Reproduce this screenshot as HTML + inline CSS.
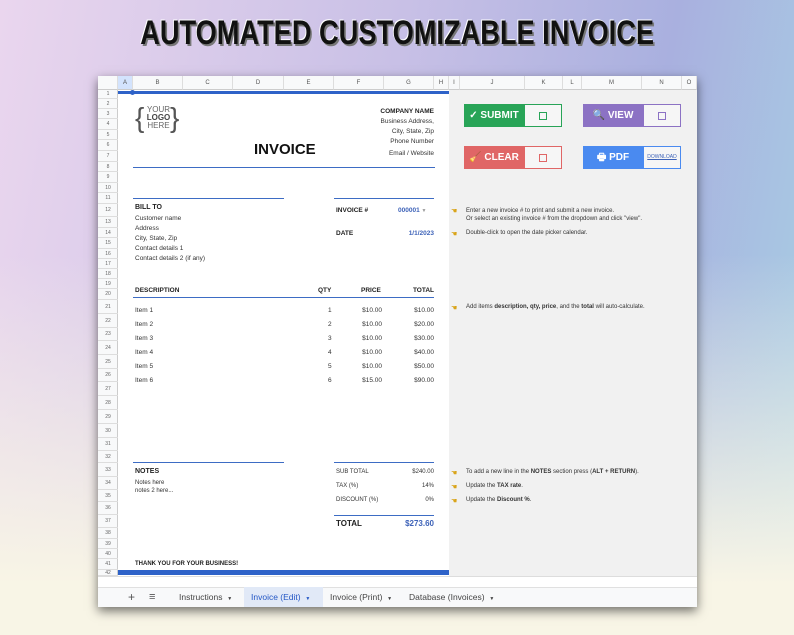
<!DOCTYPE html>
<html><head><meta charset="utf-8"><style>
*{margin:0;padding:0;box-sizing:border-box}
body{width:794px;height:635px;overflow:hidden;position:relative;font-family:"Liberation Sans",Arial,sans-serif;
background:linear-gradient(180deg,rgba(255,255,255,0) 40%,#f8f5e6 92%),linear-gradient(100deg,#ead6ee 0%,#c8c0e6 45%,#a9b0df 75%,#a8d0e4 100%);}
.a{position:absolute;white-space:nowrap}
.title{left:0;width:794px;top:14px;text-align:center;font-weight:bold;font-size:34px;color:#111;text-shadow:2px 2px 0 #777,-1px -1px 0 #fff;}
.title span{display:inline-block;transform:scaleX(.8)}
.win{left:98px;top:76px;width:599px;height:531px;background:#fff;box-shadow:0 4px 10px rgba(0,0,0,.55);overflow:hidden}
.ch{top:0;height:14px;border-right:1px solid #ddd;border-bottom:1px solid #ccc;background:#f8f9fa;font-size:6px;color:#555;text-align:center;line-height:14px}
.rn{left:0;width:20px;font-size:5px;color:#666;text-align:center;border-bottom:1px solid #ddd}
.t{font-size:6.5px;color:#333}
.b{font-weight:bold;color:#222}
.tip{font-size:6px;color:#333}
.hand{font-size:7px;color:#d9a41a}
.btn{height:23px;font-weight:bold;color:#fff;font-size:10px;line-height:23px}
.tab{top:511px;height:20px;line-height:20px;font-size:8.5px;color:#444}
</style></head><body>
<div class="a title"><span>AUTOMATED CUSTOMIZABLE INVOICE</span></div>
<div class="a win">
 <!-- gray right area -->
 <div class="a" style="left:351px;top:14px;width:248px;height:486px;background:#f1f1f1"></div>
 <div class="a" style="left:0;top:14px;width:20px;height:486px;background:#f8f9fa;border-right:1px solid #ccc"></div>
 <!-- column headers -->
 <div class="a ch" style="left:0;width:20px"></div>
 <div class="a ch" style="left:20px;width:15px;background:#d3e3fd">A</div>
 <div class="a ch" style="left:35px;width:50px">B</div>
 <div class="a ch" style="left:85px;width:50px">C</div>
 <div class="a ch" style="left:135px;width:51px">D</div>
 <div class="a ch" style="left:186px;width:50px">E</div>
 <div class="a ch" style="left:236px;width:50px">F</div>
 <div class="a ch" style="left:286px;width:50px">G</div>
 <div class="a ch" style="left:336px;width:15px">H</div>
 <div class="a ch" style="left:351px;width:11px">I</div>
 <div class="a ch" style="left:362px;width:65px">J</div>
 <div class="a ch" style="left:427px;width:38px">K</div>
 <div class="a ch" style="left:465px;width:19px">L</div>
 <div class="a ch" style="left:484px;width:60px">M</div>
 <div class="a ch" style="left:544px;width:40px">N</div>
 <div class="a ch" style="left:584px;width:15px">O</div>
 <!-- row numbers -->
 <div class="a rn" style="top:15px;height:8px">1</div>
 <div class="a rn" style="top:23px;height:10px;line-height:10px">2</div>
 <div class="a rn" style="top:33px;height:10px;line-height:10px">3</div>
 <div class="a rn" style="top:43px;height:11px;line-height:11px">4</div>
 <div class="a rn" style="top:54px;height:10px;line-height:10px">5</div>
 <div class="a rn" style="top:64px;height:11px;line-height:11px">6</div>
 <div class="a rn" style="top:75px;height:11px;line-height:11px">7</div>
 <div class="a rn" style="top:86px;height:10px;line-height:10px">8</div>
 <div class="a rn" style="top:96px;height:11px;line-height:11px">9</div>
 <div class="a rn" style="top:107px;height:10px;line-height:10px">10</div>
 <div class="a rn" style="top:117px;height:11px;line-height:11px">11</div>
 <div class="a rn" style="top:128px;height:13px;line-height:13px">12</div>
 <div class="a rn" style="top:141px;height:11px;line-height:11px">13</div>
 <div class="a rn" style="top:152px;height:10px;line-height:10px">14</div>
 <div class="a rn" style="top:162px;height:11px;line-height:11px">15</div>
 <div class="a rn" style="top:173px;height:10px;line-height:10px">16</div>
 <div class="a rn" style="top:183px;height:10px;line-height:10px">17</div>
 <div class="a rn" style="top:193px;height:10px;line-height:10px">18</div>
 <div class="a rn" style="top:203px;height:10px;line-height:10px">19</div>
 <div class="a rn" style="top:213px;height:11px;line-height:11px">20</div>
 <div class="a rn" style="top:224px;height:14px;line-height:14px">21</div>
 <div class="a rn" style="top:238px;height:14px;line-height:14px">22</div>
 <div class="a rn" style="top:252px;height:13px;line-height:13px">23</div>
 <div class="a rn" style="top:265px;height:14px;line-height:14px">24</div>
 <div class="a rn" style="top:279px;height:14px;line-height:14px">25</div>
 <div class="a rn" style="top:293px;height:13px;line-height:13px">26</div>
 <div class="a rn" style="top:306px;height:14px;line-height:14px">27</div>
 <div class="a rn" style="top:320px;height:14px;line-height:14px">28</div>
 <div class="a rn" style="top:334px;height:14px;line-height:14px">29</div>
 <div class="a rn" style="top:348px;height:14px;line-height:14px">30</div>
 <div class="a rn" style="top:362px;height:13px;line-height:13px">31</div>
 <div class="a rn" style="top:375px;height:12px;line-height:12px">32</div>
 <div class="a rn" style="top:387px;height:14px;line-height:14px">33</div>
 <div class="a rn" style="top:401px;height:13px;line-height:13px">34</div>
 <div class="a rn" style="top:414px;height:12px;line-height:12px">35</div>
 <div class="a rn" style="top:426px;height:13px;line-height:13px">36</div>
 <div class="a rn" style="top:439px;height:13px;line-height:13px">37</div>
 <div class="a rn" style="top:452px;height:11px;line-height:11px">38</div>
 <div class="a rn" style="top:463px;height:10px;line-height:10px">39</div>
 <div class="a rn" style="top:473px;height:10px;line-height:10px">40</div>
 <div class="a rn" style="top:483px;height:11px;line-height:11px">41</div>
 <div class="a rn" style="top:494px;height:6px;line-height:6px">42</div>
 <!-- top & bottom blue bars -->
 <div class="a" style="left:20px;top:15px;width:331px;height:3px;background:#2e62c8"></div>
 <div class="a" style="left:32px;top:14px;width:5px;height:5px;border-radius:50%;background:#2e62c8"></div>
 <div class="a" style="left:20px;top:494px;width:331px;height:5px;background:#2e62c8"></div>
 <!-- logo -->
 <div class="a" style="left:37px;top:28px;font-size:28px;color:#555;line-height:28px;font-weight:300">{</div>
 <div class="a" style="left:47px;top:30px;font-size:8px;color:#666;line-height:8px;text-align:center;width:27px">YOUR<br><b style="color:#444">LOGO</b><br>HERE</div>
 <div class="a" style="left:72px;top:28px;font-size:28px;color:#555;line-height:28px;font-weight:300">}</div>
 <div class="a t b" style="right:263px;top:32px">COMPANY NAME</div>
 <div class="a t" style="right:263px;top:42px">Business Address,</div>
 <div class="a t" style="right:263px;top:52px">City, State, Zip</div>
 <div class="a t" style="right:263px;top:62px">Phone Number</div>
 <div class="a t" style="right:263px;top:74px">Email / Website</div>
 <div class="a" style="left:156px;top:65px;font-size:15px;font-weight:bold;color:#111">INVOICE</div>
 <div class="a" style="left:35px;top:91px;width:302px;height:1px;background:#3d6cc4"></div>
 <!-- bill to -->
 <div class="a" style="left:35px;top:122px;width:151px;height:1px;background:#3d6cc4"></div>
 <div class="a" style="left:236px;top:122px;width:100px;height:1px;background:#3d6cc4"></div>
 <div class="a t b" style="left:37px;top:128px;font-size:7px">BILL TO</div>
 <div class="a t" style="left:37px;top:139px">Customer name</div>
 <div class="a t" style="left:37px;top:149px">Address</div>
 <div class="a t" style="left:37px;top:159px">City, State, Zip</div>
 <div class="a t" style="left:37px;top:169px">Contact details 1</div>
 <div class="a t" style="left:37px;top:179px">Contact details 2 (if any)</div>
 <div class="a t b" style="left:238px;top:131px">INVOICE #</div>
 <div class="a t b" style="left:300px;top:131px;color:#3d62b8">000001 <span style="color:#999;font-size:5px">▼</span></div>
 <div class="a t b" style="left:238px;top:154px">DATE</div>
 <div class="a t b" style="right:263px;top:154px;color:#3d62b8">1/1/2023</div>
 <!-- items -->
 <div class="a t b" style="left:37px;top:211px">DESCRIPTION</div>
 <div class="a t b" style="left:220px;top:211px">QTY</div>
 <div class="a t b" style="left:263px;top:211px">PRICE</div>
 <div class="a t b" style="right:263px;top:211px">TOTAL</div>
 <div class="a" style="left:35px;top:221px;width:301px;height:1px;background:#3d6cc4"></div>
 <div class="a t" style="left:37px;top:228px;line-height:14px">Item 1<br>Item 2<br>Item 3<br>Item 4<br>Item 5<br>Item 6</div>
 <div class="a t" style="left:230px;top:228px;line-height:14px">1<br>2<br>3<br>4<br>5<br>6</div>
 <div class="a t" style="right:315px;top:228px;line-height:14px;text-align:right">$10.00<br>$10.00<br>$10.00<br>$10.00<br>$10.00<br>$15.00</div>
 <div class="a t" style="right:263px;top:228px;line-height:14px;text-align:right">$10.00<br>$20.00<br>$30.00<br>$40.00<br>$50.00<br>$90.00</div>
 <!-- notes & totals -->
 <div class="a" style="left:35px;top:386px;width:151px;height:1px;background:#3d6cc4"></div>
 <div class="a" style="left:236px;top:386px;width:100px;height:1px;background:#3d6cc4"></div>
 <div class="a t b" style="left:37px;top:392px;font-size:7px">NOTES</div>
 <div class="a t" style="left:37px;top:403px;font-size:6px;line-height:8px">Notes here<br>notes 2 here...</div>
 <div class="a t" style="left:238px;top:393px;font-size:6px">SUB TOTAL</div>
 <div class="a t" style="right:263px;top:393px;font-size:6px">$240.00</div>
 <div class="a t" style="left:238px;top:407px;font-size:6px">TAX (%)</div>
 <div class="a t" style="right:263px;top:407px;font-size:6px">14%</div>
 <div class="a t" style="left:238px;top:421px;font-size:6px">DISCOUNT (%)</div>
 <div class="a t" style="right:263px;top:421px;font-size:6px">0%</div>
 <div class="a" style="left:236px;top:439px;width:100px;height:1px;background:#3d6cc4"></div>
 <div class="a t b" style="left:238px;top:443px;font-size:8px">TOTAL</div>
 <div class="a t b" style="right:263px;top:443px;font-size:8px;color:#3d62b8">$273.60</div>
 <div class="a t b" style="left:37px;top:485px;font-size:6px">THANK YOU FOR YOUR BUSINESS!</div>
 <!-- buttons -->
 <div class="a btn" style="left:366px;top:28px;width:60px;background:#28a457;text-align:center">✓ SUBMIT</div>
 <div class="a" style="left:426px;top:28px;width:38px;height:23px;border:1px solid #28a457;background:#f6f6f6"><div style="margin:7px auto;width:8px;height:8px;border:1px solid #28a457"></div></div>
 <div class="a btn" style="left:485px;top:28px;width:60px;background:#8c72c4;text-align:center">🔍 VIEW</div>
 <div class="a" style="left:545px;top:28px;width:38px;height:23px;border:1px solid #8c72c4;background:#f6f6f6"><div style="margin:7px auto;width:8px;height:8px;border:1px solid #8c72c4"></div></div>
 <div class="a btn" style="left:366px;top:70px;width:60px;background:#e06666;text-align:center">🧹 CLEAR</div>
 <div class="a" style="left:426px;top:70px;width:38px;height:23px;border:1px solid #e06666;background:#f6f6f6"><div style="margin:7px auto;width:8px;height:8px;border:1px solid #e06666"></div></div>
 <div class="a btn" style="left:485px;top:70px;width:60px;background:#4a8af0;text-align:center">🖶 PDF</div>
 <div class="a" style="left:545px;top:70px;width:38px;height:23px;border:1px solid #4a8af0;background:#f6f6f6;font-size:5px;color:#3d62b8;text-decoration:underline;text-align:center;line-height:21px">DOWNLOAD</div>
 <!-- tips -->
 <div class="a hand" style="left:353px;top:131px">☚</div>
 <div class="a tip" style="left:368px;top:131px;line-height:8px">Enter a new invoice # to print and submit a new invoice.<br>Or select an existing invoice # from the dropdown and click "view".</div>
 <div class="a hand" style="left:353px;top:154px">☚</div>
 <div class="a tip" style="left:368px;top:154px">Double-click to open the date picker calendar.</div>
 <div class="a hand" style="left:353px;top:228px">☚</div>
 <div class="a tip" style="left:368px;top:228px">Add items <b>description, qty, price</b>, and the <b>total</b> will auto-calculate.</div>
 <div class="a hand" style="left:353px;top:393px">☚</div>
 <div class="a tip" style="left:368px;top:393px">To add a new line in the <b>NOTES</b> section press (<b>ALT + RETURN</b>).</div>
 <div class="a hand" style="left:353px;top:407px">☚</div>
 <div class="a tip" style="left:368px;top:407px">Update the <b>TAX rate</b>.</div>
 <div class="a hand" style="left:353px;top:421px">☚</div>
 <div class="a tip" style="left:368px;top:421px">Update the <b>Discount %</b>.</div>
 <!-- bottom strip & tabs -->
 <div class="a" style="left:0;top:500px;width:599px;height:11px;background:#fff;border-top:1px solid #ddd"></div>
 <div class="a" style="left:0;top:511px;width:599px;height:20px;background:#f8f9fa;border-top:1px solid #e0e0e0"></div>
 <div class="a tab" style="left:30px;font-size:12px;color:#555">+</div>
 <div class="a tab" style="left:51px;font-size:11px;color:#555">≡</div>
 <div class="a tab" style="left:81px">Instructions &nbsp;<span style="font-size:5px">▼</span></div>
 <div class="a tab" style="left:146px;width:79px;background:#e1e9f7;color:#2457c5;padding-left:7px">Invoice (Edit) &nbsp;<span style="font-size:5px">▼</span></div>
 <div class="a tab" style="left:232px">Invoice (Print) &nbsp;<span style="font-size:5px">▼</span></div>
 <div class="a tab" style="left:311px">Database (Invoices) &nbsp;<span style="font-size:5px">▼</span></div>
</div>
</body></html>
